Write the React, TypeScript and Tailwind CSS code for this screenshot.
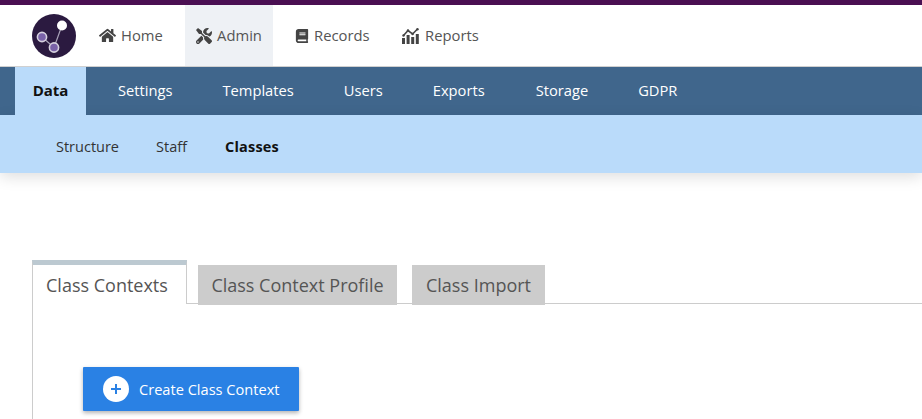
import type { ReactNode } from 'react';
import { FaHome, FaTools, FaBook } from 'react-icons/fa';

const mainNav = [
  { label: 'Settings', margin: 'ml-[32px]' },
  { label: 'Templates', margin: 'ml-[50px]' },
  { label: 'Users', margin: 'ml-[50px]' },
  { label: 'Exports', margin: 'ml-[50px]' },
  { label: 'Storage', margin: 'ml-[51px]' },
  { label: 'GDPR', margin: 'ml-[50px]' },
];

function ReportsIcon() {
  return (
    <svg width="17" height="16" viewBox="0 0 17 16" className="fill-[#444]">
      <rect x="0" y="10" width="3" height="6" />
      <rect x="4.6" y="7" width="3" height="9" />
      <rect x="9.2" y="9" width="3" height="7" />
      <rect x="13.8" y="6" width="3" height="10" />
      <path d="M1.5 7.5 6 2.5l4.6 3.5L15.5 1" fill="none" stroke="#444" strokeWidth="1.6" />
      <circle cx="1.5" cy="7.5" r="1.2" />
      <circle cx="6" cy="2.5" r="1.2" />
      <circle cx="10.6" cy="6" r="1.2" />
      <circle cx="15.5" cy="1.2" r="1.2" />
    </svg>
  );
}

function Logo() {
  return (
    <svg width="44" height="44" viewBox="0 0 44 44">
      <circle cx="22" cy="22" r="22" fill="#2b1a40" />
      <path d="M10 23 22 33.5 30 11.5" fill="none" stroke="#a9a3b8" strokeWidth="1.2" />
      <circle cx="10" cy="23" r="4.6" fill="#7a62a8" stroke="#d5d0de" strokeWidth="1.6" />
      <circle cx="22" cy="33.5" r="4.6" fill="#7a62a8" stroke="#d5d0de" strokeWidth="1.6" />
      <circle cx="30" cy="11.5" r="5" fill="#ffffff" />
    </svg>
  );
}

function TopLink({ icon, label, className }: { icon: ReactNode; label: string; className: string }) {
  return (
    <a className={`flex h-full items-center text-[14.8px] text-[#555] ${className}`}>
      {icon}
      {label}
    </a>
  );
}

export default function App() {
  return (
    <div className="h-[419px] overflow-hidden bg-white font-['Open_Sans',sans-serif]">
      <header className="flex h-[67px] items-stretch border-t-[5px] border-b border-t-[#4a0f52] border-b-[#d0d0d0] pl-[32px]">
        <div className="flex w-[67px] items-center pt-[1px]">
          <Logo />
        </div>
        <TopLink className="w-[86px] gap-[5px]" icon={<FaHome className="text-[17px] text-[#444]" />} label="Home" />
        <TopLink className="w-[88px] justify-center gap-[5px] bg-[#eef1f5]" icon={<FaTools className="text-[16px] text-[#444]" />} label="Admin" />
        <TopLink className="w-[129px] gap-[5px] pl-[22px]" icon={<FaBook className="text-[14px] text-[#444]" />} label="Records" />
        <TopLink className="w-[100px] gap-[6px]" icon={<ReportsIcon />} label="Reports" />
      </header>

      <nav className="flex h-[48px] bg-[#40668c] pl-[15px] text-[14.7px]">
        <a className="flex w-[71px] items-center justify-center bg-[#badbfa] pb-[2px] text-[15px] font-bold text-[#111]">Data</a>
        {mainNav.map((item) => (
          <a key={item.label} className={`flex items-center pb-[2px] text-white ${item.margin}`}>
            {item.label}
          </a>
        ))}
      </nav>

      <div className="flex h-[58px] items-center bg-[#badbfa] pl-[56px] pt-[5px] text-[14.5px] text-[#333] shadow-[0_4px_14px_rgba(0,0,0,0.13)]">
        <a>Structure</a>
        <a className="ml-[37px]">Staff</a>
        <a className="ml-[38px] font-bold tracking-[0.2px] text-[#111]">Classes</a>
      </div>

      <main className="pl-[32px] pt-[87px]">
        <div className="flex h-[44px] items-end border-b border-[#cccccc] text-[18px] text-[#555]">
          <div className="-mb-[1px] flex h-[44px] w-[155px] items-center border-x border-t-[5px] border-[#cccccc] border-t-[#bcc9d1] bg-white pl-[13px] pt-[1px]">
            Class Contexts
          </div>
          <div className="-mb-[2px] ml-[11px] flex h-[40px] w-[199px] items-center justify-center bg-[#cccccc]">Class Context Profile</div>
          <div className="-mb-[2px] ml-[15px] flex h-[40px] w-[133px] items-center justify-center bg-[#cccccc]">Class Import</div>
        </div>
        <div className="h-[120px] border-l border-[#cccccc] pl-[50px] pt-[63px]">
          <button className="flex h-[44px] w-[216px] items-center gap-[10px] rounded-[1px] bg-[#2a81e4] pl-[20px] text-[14.6px] text-white shadow-[0_2px_4px_rgba(0,0,0,0.3)]">
            <span className="flex h-[26px] w-[26px] items-center justify-center rounded-full bg-white">
              <svg width="10" height="10" viewBox="0 0 10 10" className="stroke-[#2a81e4]">
                <path d="M5 0v10M0 5h10" strokeWidth="2" />
              </svg>
            </span>
            <span className="pt-[1px]">Create Class Context</span>
          </button>
        </div>
      </main>
    </div>
  );
}
